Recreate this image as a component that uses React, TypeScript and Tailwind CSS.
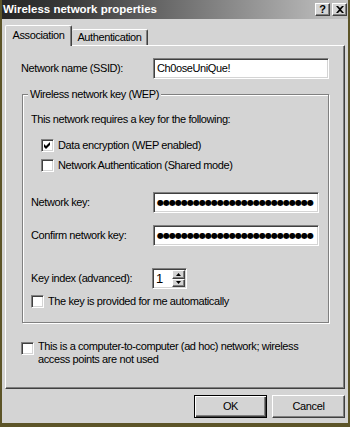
import React from "react";

const raised =
  "border border-t-white border-l-white border-r-[#404040] border-b-[#404040] shadow-[inset_-1px_-1px_0_#808080]";
const sunken =
  "bg-white border border-t-[#808080] border-l-[#808080] border-r-white border-b-white shadow-[inset_1px_1px_0_#404040,inset_-1px_-1px_0_#d4d4d4]";

function CheckBox({ checked = false }: { checked?: boolean }) {
  return (
    <span className={`flex h-[13px] w-[13px] shrink-0 items-center justify-center ${sunken}`}>
      {checked && (
        <svg width="7" height="7" viewBox="0 0 7 7">
          <path d="M0 2 L2 4 L6 0 L6 3 L2 7 L0 5 Z" fill="#000" />
        </svg>
      )}
    </span>
  );
}

function Dots() {
  return (
    <div className={`flex h-[21px] w-[166px] items-center pl-[3px] ${sunken}`}>
      {Array.from({ length: 26 }).map((_, i) => (
        <span key={i} className="w-[6px] text-center font-['DejaVu_Sans',sans-serif] text-[8px] leading-none tracking-normal">
          ●
        </span>
      ))}
    </div>
  );
}

export default function App() {
  return (
    <div className="flex h-[427px] w-[350px] flex-col overflow-hidden border-b-4 border-l-2 border-r-2 border-[#5c5428] bg-[#d4d4d4] font-['Liberation_Sans',Arial,sans-serif] text-[11px] leading-[13px] tracking-[-0.4px] text-black">
      {/* Title bar */}
      <div className="flex h-[19px] shrink-0 items-center justify-between bg-[linear-gradient(to_right,#262626,#3a3a3a_20%,#c4c4c4)] pl-[1px] pr-[1px]">
        <span className="text-[11.5px] font-bold tracking-normal text-white">Wireless network properties</span>
        <div className="flex gap-[2px]">
          <span className={`flex h-[13px] w-[15px] items-center justify-center bg-[#d4d4d4] text-[11px] font-bold leading-none ${raised}`}>
            ?
          </span>
          <span className={`flex h-[13px] w-[15px] items-center justify-center bg-[#d4d4d4] ${raised}`}>
            <svg width="8" height="7" viewBox="0 0 8 7">
              <path d="M0 0h2l2 2 2-2h2L5 3.5 8 7H6L4 5 2 7H0l3-3.5z" fill="#000" />
            </svg>
          </span>
        </div>
      </div>

      {/* Tabs */}
      <div className="flex flex-col px-[3px] pt-[6px]">
        <div className="relative z-10 flex items-end">
          <div className="flex h-[21px] w-[67px] items-center justify-center rounded-t-[2px] border-l border-r border-t border-l-white border-r-[#404040] border-t-white bg-[#d4d4d4] pb-[2px] shadow-[inset_-1px_0_0_#808080]">
            Association
          </div>
          <div className="mb-px flex h-[16px] w-[76px] items-center justify-center rounded-t-[2px] border-r border-t border-r-[#404040] border-t-white shadow-[inset_-1px_0_0_#808080]">
            Authentication
          </div>
        </div>

        {/* Panel */}
        <div className={`-mt-px flex h-[344px] flex-col px-[15px] pt-[12px] ${raised}`}>
          <div className="flex h-[21px] items-center justify-between">
            <span>Network name (SSID):</span>
            <div className={`flex h-[21px] w-[176px] items-center px-[3px] ${sunken}`}>Ch0oseUniQue!</div>
          </div>

          <fieldset className="ml-px mt-[9px] border border-[#808080] pb-[14px] pl-[8px] pr-[9px] shadow-[1px_1px_0_#fff,inset_1px_1px_0_#fff]">
            <legend className="-ml-[3px] bg-[#d4d4d4] px-[2px]">Wireless network key (WEP)</legend>
            <div className="mt-[12px]">This network requires a key for the following:</div>
            <div className="ml-[10px] mt-[13px] flex items-center gap-[4px]">
              <CheckBox checked />
              <span>Data encryption (WEP enabled)</span>
            </div>
            <div className="ml-[10px] mt-[7px] flex items-center gap-[4px]">
              <CheckBox />
              <span>Network Authentication (Shared mode)</span>
            </div>
            <div className="mt-[20px] flex items-center justify-between">
              <span>Network key:</span>
              <Dots />
            </div>
            <div className="mt-[12px] flex items-center justify-between">
              <span>Confirm network key:</span>
              <Dots />
            </div>
            <div className="mt-[22px] flex items-center">
              <span className="w-[121px]">Key index (advanced):</span>
              <div className={`flex h-[21px] w-[35px] items-stretch justify-between p-[1px] pl-[3px] ${sunken}`}>
                <span className="flex items-center text-[13px]">1</span>
                <div className="flex w-[13px] flex-col">
                  <span className={`flex flex-1 items-center justify-center bg-[#d4d4d4] ${raised}`}>
                    <svg width="5" height="3" viewBox="0 0 5 3"><path d="M2.5 0L5 3H0z" /></svg>
                  </span>
                  <span className={`flex flex-1 items-center justify-center bg-[#d4d4d4] ${raised}`}>
                    <svg width="5" height="3" viewBox="0 0 5 3"><path d="M0 0h5L2.5 3z" /></svg>
                  </span>
                </div>
              </div>
            </div>
            <div className="mt-[6px] flex items-center gap-[4px]">
              <CheckBox />
              <span>The key is provided for me automatically</span>
            </div>
          </fieldset>

          <div className="mt-[17px] flex items-start gap-[4px]">
            <span className="mt-[2px]">
              <CheckBox />
            </span>
            <span>
              This is a computer-to-computer (ad hoc) network; wireless
              <br />
              access points are not used
            </span>
          </div>
        </div>

        {/* Buttons */}
        <div className="mt-[6px] flex justify-end gap-[5px]">
          <button className="h-[23px] w-[73px] border border-black bg-[#d4d4d4] shadow-[inset_1px_1px_0_#fff,inset_-1px_-1px_0_#404040,inset_-2px_-2px_0_#808080]">
            OK
          </button>
          <button className={`h-[23px] w-[73px] bg-[#d4d4d4] ${raised}`}>Cancel</button>
        </div>
      </div>
    </div>
  );
}
